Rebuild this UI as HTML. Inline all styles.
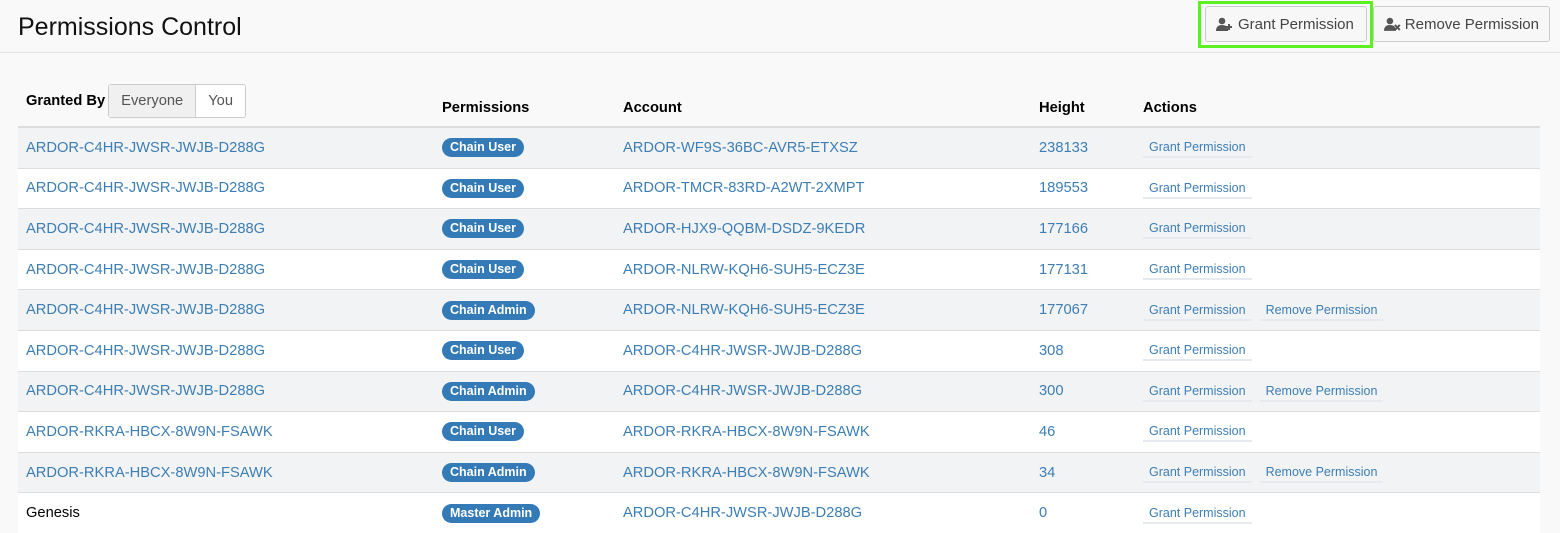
<!DOCTYPE html>
<html><head><style>
body{margin:0;width:1560px;height:530px;overflow:hidden;background:#f9f9f9;font-family:"Liberation Sans",sans-serif;color:#000}
.hdr{height:52px;border-bottom:1px solid #e3e3e3;position:relative;background:#f9f9f9}
.hdr h1{margin:0;position:absolute;left:18px;top:13px;font-size:25px;font-weight:normal;color:#111}
.btn{position:absolute;top:6px;height:36px;border:1px solid #ccc;border-radius:3px;background:#f7f7f7;font-size:15px;color:#444;display:flex;align-items:center;box-sizing:border-box;padding:0 10px;white-space:nowrap}
.hl{position:absolute;left:1198px;top:1px;width:175px;height:47px;border:3px solid #5bf01f;box-sizing:border-box}
table{position:absolute;left:18px;top:70px;width:1522px;border-collapse:collapse;font-size:14.7px}
th{text-align:left;font-size:14.7px;font-weight:bold;height:46px;vertical-align:bottom;padding:0 8px 10px;border-bottom:2px solid #ddd}
td{height:39.6px;padding:0 8px;border-top:1px solid #ddd;vertical-align:middle;white-space:nowrap}
tr.o td{background:#f2f3f5}
tr.e td{background:#fff}
a{color:#3d7eb5;text-decoration:none}
.b{display:inline-block;background:#337ab7;color:#fff;font-size:12.5px;font-weight:bold;padding:3px 8px 3px;border-radius:10px;line-height:13px}
.ac{display:inline-block;font-size:12.5px;color:#3d7eb5;padding:3px 6px 2px;border-bottom:2px solid #e6e9ee;margin-right:8px}
.tg{display:inline-flex;border:1px solid #ccc;border-radius:3px;vertical-align:middle;margin-left:0;background:#fff;font-weight:normal}
.tg span{padding:8px 12px;font-size:14.7px;color:#555}
</style></head><body>
<div class="hdr"><h1>Permissions Control</h1>
<div class="btn" style="left:1205px;width:162px"><svg width="18" height="14" viewBox="0 0 18 14" style="margin-right:4px"><circle cx="6" cy="4" r="3.3" fill="#555"/><path d="M0 14 Q0 8 6 8 Q11 8 12 12 L12 14Z" fill="#555"/><path d="M13 7v6M10 10h6" stroke="#555" stroke-width="2"/></svg>Grant Permission</div>
<div class="btn" style="left:1373px;width:177px"><svg width="18" height="14" viewBox="0 0 18 14" style="margin-right:3px"><circle cx="6" cy="4" r="3.3" fill="#555"/><path d="M0 14 Q0 8 6 8 Q11 8 12 12 L12 14Z" fill="#555"/><path d="M11 8l5 5M16 8l-5 5" stroke="#555" stroke-width="2"/></svg>Remove Permission</div>
<div class="hl"></div></div>
<table>
<tr><th style="width:400px;padding-bottom:8px">Granted By<span class="tg" style="margin-left:3px"><span style="background:#f0f0f0;border-right:1px solid #ccc">Everyone</span><span>You</span></span></th><th style="width:165px">Permissions</th><th style="width:400px">Account</th><th style="width:88px">Height</th><th>Actions</th></tr>
<tr class="o"><td><a>ARDOR-C4HR-JWSR-JWJB-D288G</a></td><td><span class="b">Chain User</span></td><td><a>ARDOR-WF9S-36BC-AVR5-ETXSZ</a></td><td><a>238133</a></td><td><span class="ac">Grant Permission</span></td></tr>
<tr class="e"><td><a>ARDOR-C4HR-JWSR-JWJB-D288G</a></td><td><span class="b">Chain User</span></td><td><a>ARDOR-TMCR-83RD-A2WT-2XMPT</a></td><td><a>189553</a></td><td><span class="ac">Grant Permission</span></td></tr>
<tr class="o"><td><a>ARDOR-C4HR-JWSR-JWJB-D288G</a></td><td><span class="b">Chain User</span></td><td><a>ARDOR-HJX9-QQBM-DSDZ-9KEDR</a></td><td><a>177166</a></td><td><span class="ac">Grant Permission</span></td></tr>
<tr class="e"><td><a>ARDOR-C4HR-JWSR-JWJB-D288G</a></td><td><span class="b">Chain User</span></td><td><a>ARDOR-NLRW-KQH6-SUH5-ECZ3E</a></td><td><a>177131</a></td><td><span class="ac">Grant Permission</span></td></tr>
<tr class="o"><td><a>ARDOR-C4HR-JWSR-JWJB-D288G</a></td><td><span class="b">Chain Admin</span></td><td><a>ARDOR-NLRW-KQH6-SUH5-ECZ3E</a></td><td><a>177067</a></td><td><span class="ac">Grant Permission</span><span class="ac">Remove Permission</span></td></tr>
<tr class="e"><td><a>ARDOR-C4HR-JWSR-JWJB-D288G</a></td><td><span class="b">Chain User</span></td><td><a>ARDOR-C4HR-JWSR-JWJB-D288G</a></td><td><a>308</a></td><td><span class="ac">Grant Permission</span></td></tr>
<tr class="o"><td><a>ARDOR-C4HR-JWSR-JWJB-D288G</a></td><td><span class="b">Chain Admin</span></td><td><a>ARDOR-C4HR-JWSR-JWJB-D288G</a></td><td><a>300</a></td><td><span class="ac">Grant Permission</span><span class="ac">Remove Permission</span></td></tr>
<tr class="e"><td><a>ARDOR-RKRA-HBCX-8W9N-FSAWK</a></td><td><span class="b">Chain User</span></td><td><a>ARDOR-RKRA-HBCX-8W9N-FSAWK</a></td><td><a>46</a></td><td><span class="ac">Grant Permission</span></td></tr>
<tr class="o"><td><a>ARDOR-RKRA-HBCX-8W9N-FSAWK</a></td><td><span class="b">Chain Admin</span></td><td><a>ARDOR-RKRA-HBCX-8W9N-FSAWK</a></td><td><a>34</a></td><td><span class="ac">Grant Permission</span><span class="ac">Remove Permission</span></td></tr>
<tr class="e"><td>Genesis</td><td><span class="b">Master Admin</span></td><td><a>ARDOR-C4HR-JWSR-JWJB-D288G</a></td><td><a>0</a></td><td><span class="ac">Grant Permission</span></td></tr>
</table>
</body></html>
